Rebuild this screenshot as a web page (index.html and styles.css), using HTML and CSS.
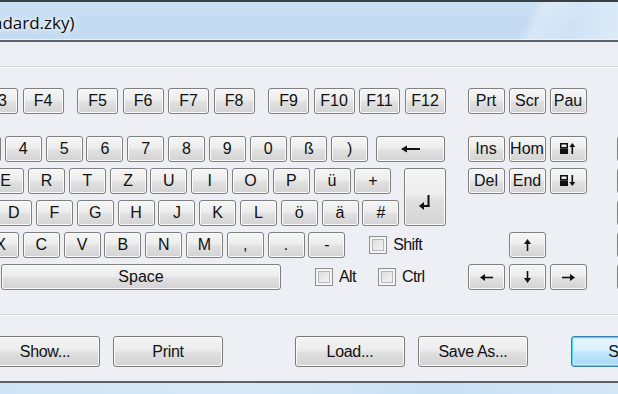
FILE: index.html
```html
<!DOCTYPE html>
<html>
<head>
<meta charset="utf-8">
<link rel="stylesheet" href="styles.css">
</head>
<body>
<div class="screen">
  <header class="titlebar"><span class="title">ndard.zky)</span></header>
  <main class="dialog">
    <div class="band"></div>
    <div class="keyboard">
      <div class="frow">
        <span class="key fk">F3</span><span class="key fk">F4</span>
        <span class="key fk grp">F5</span><span class="key fk">F6</span><span class="key fk">F7</span><span class="key fk">F8</span>
        <span class="key fk grp">F9</span><span class="key fk">F10</span><span class="key fk">F11</span><span class="key fk">F12</span>
        <span class="key sk first">Prt</span><span class="key sk">Scr</span><span class="key sk">Pau</span>
      </div>
      <div class="main">
        <div class="alpha">
          <div class="row r2">
            <span class="key">3</span><span class="key">4</span><span class="key">5</span><span class="key">6</span><span class="key">7</span><span class="key">8</span><span class="key">9</span><span class="key">0</span><span class="key">ß</span><span class="key">)</span>
            <span class="key back"><svg width="19" height="8" viewBox="0 0 19 8"><path d="M0 4 L6 0.5 L6 7.5 Z" fill="#111"/><rect x="5" y="3" width="14" height="2" fill="#111"/></svg></span>
          </div>
          <div class="row34">
            <div class="col34">
              <div class="row r3">
                <span class="key">E</span><span class="key">R</span><span class="key">T</span><span class="key">Z</span><span class="key">U</span><span class="key">I</span><span class="key">O</span><span class="key">P</span><span class="key">ü</span><span class="key">+</span>
              </div>
              <div class="row r4">
                <span class="key">D</span><span class="key">F</span><span class="key">G</span><span class="key">H</span><span class="key">J</span><span class="key">K</span><span class="key">L</span><span class="key">ö</span><span class="key">ä</span><span class="key">#</span>
              </div>
            </div>
            <span class="key enter"><svg width="12" height="15" viewBox="0 0 12 15"><rect x="8.5" y="0" width="2" height="12" fill="#111"/><rect x="4" y="10" width="6.5" height="2" fill="#111"/><path d="M0 11 L5 7 L5 15 Z" fill="#111"/></svg></span>
          </div>
          <div class="row r5">
            <span class="key">X</span><span class="key">C</span><span class="key">V</span><span class="key">B</span><span class="key">N</span><span class="key">M</span><span class="key">,</span><span class="key">.</span><span class="key">-</span>
            <label class="chk shift"><span class="box"></span><span class="lbl">Shift</span></label>
          </div>
          <div class="row r6">
            <span class="key space">Space</span>
            <label class="chk alt"><span class="box"></span><span class="lbl">Alt</span></label>
            <label class="chk ctrl"><span class="box"></span><span class="lbl">Ctrl</span></label>
          </div>
        </div>
        <div class="nav">
          <span class="key sk">Ins</span><span class="key sk">Hom</span>
          <span class="key sk"><svg width="16" height="11" viewBox="0 0 16 11"><rect x="0.75" y="0.75" width="6.5" height="4" fill="none" stroke="#111" stroke-width="1.5"/><rect x="0" y="5.5" width="8" height="5.5" fill="#111"/><rect x="11.5" y="2" width="1.6" height="9" fill="#111"/><path d="M12.3 0 L15.3 4 L9.3 4 Z" fill="#111"/></svg></span>
          <span class="key sk">Del</span><span class="key sk">End</span>
          <span class="key sk"><svg width="16" height="11" viewBox="0 0 16 11"><rect x="0.75" y="0.75" width="6.5" height="4" fill="none" stroke="#111" stroke-width="1.5"/><rect x="0" y="5.5" width="8" height="5.5" fill="#111"/><rect x="11.5" y="0" width="1.6" height="9" fill="#111"/><path d="M12.3 11 L15.3 7 L9.3 7 Z" fill="#111"/></svg></span>
          <span class="key sk up"><svg width="7" height="12" viewBox="0 0 7 12"><path d="M3.5 0 L7 5 L0 5 Z" fill="#111"/><rect x="2.7" y="4" width="1.6" height="8" fill="#111"/></svg></span>
          <span class="key sk lft"><svg width="13" height="7" viewBox="0 0 13 7"><path d="M0 3.5 L5 0 L5 7 Z" fill="#111"/><rect x="4" y="2.7" width="9" height="1.6" fill="#111"/></svg></span>
          <span class="key sk dwn"><svg width="7" height="12" viewBox="0 0 7 12"><path d="M3.5 12 L7 7 L0 7 Z" fill="#111"/><rect x="2.7" y="0" width="1.6" height="8" fill="#111"/></svg></span>
          <span class="key sk rgt"><svg width="13" height="7" viewBox="0 0 13 7"><path d="M13 3.5 L8 0 L8 7 Z" fill="#111"/><rect x="0" y="2.7" width="9" height="1.6" fill="#111"/></svg></span>
        </div>
        <div class="numpad">
          <span class="key sk"></span><span class="key sk"></span><span class="key sk"></span><span class="key sk"></span><span class="key sk"></span>
        </div>
      </div>
    </div>
    <div class="sep"></div>
    <div class="buttons">
      <button class="btn">Show...</button>
      <button class="btn">Print</button>
      <button class="btn far">Load...</button>
      <button class="btn">Save As...</button>
      <button class="btn def">Save</button>
    </div>
  </main>
  <footer class="framebottom"></footer>
</div>
</body>
</html>
```
FILE: styles.css
```css
html, body {
  margin: 0;
  padding: 0;
  width: 618px;
  height: 394px;
  overflow: hidden;
  background: #eeeef5;
}
.screen {
  width: 618px;
  height: 394px;
  overflow: hidden;
  display: flex;
  flex-direction: column;
  font-family: "Liberation Sans", Arial, sans-serif;
  color: #111;
}
.titlebar {
  height: 38px;
  flex: none;
  border-top: 2px solid #3b4046;
  border-bottom: 2px solid #5a6068;
  box-shadow: inset 0 -1px 0 #e8f2fb;
  background:
    linear-gradient(115deg, rgba(255,255,255,0) 0%, rgba(255,255,255,0) 84%, rgba(255,255,255,0.35) 86%, rgba(255,255,255,0.2) 92%, rgba(255,255,255,0.45) 100%),
    linear-gradient(180deg, #c9e0f4 0%, #c2daf1 60%, #c5dcf1 100%);
  display: flex;
  align-items: center;
  overflow: hidden;
}
.title {
  font-family: "Open Sans", "Noto Sans", sans-serif;
  font-size: 17px;
  margin-left: -8px;
  margin-top: 2px;
  color: #0b0b0b;
  text-shadow: 0 0 8px #ffffff, 0 0 4px #f4faff;
}
.dialog {
  flex: none;
  height: 339px;
  background: #eeeef5;
  display: flex;
  flex-direction: column;
}
.band {
  height: 24px;
  flex: none;
  border-bottom: 1px solid #d5d5db;
  box-shadow: 0 1px 0 #fbfbfd;
}
.keyboard {
  margin-left: -40px;
  padding-top: 21px;
  display: flex;
  flex-direction: column;
}
.key {
  box-sizing: border-box;
  flex: none;
  width: 37px;
  height: 26.5px;
  border: 1px solid #7f7f7f;
  border-radius: 3px;
  box-shadow: inset 0 0 0 1px #fbfbfb;
  background: linear-gradient(180deg, #f5f5f5 0%, #ededed 45%, #e0e0e0 55%, #d3d3d3 100%);
  display: flex;
  align-items: center;
  justify-content: center;
  font-size: 16px;
  line-height: 1;
  color: #111;
}
.frow {
  display: flex;
  gap: 4.5px;
  padding-left: 17px;
  height: 26px;
}
.frow .key { height: 26px; }
.fk { width: 41px; }
.fk.grp { margin-left: 9px; }
.sk { width: 37px; }
.frow .sk { margin-left: -0.5px; }
.frow .sk.first { margin-left: 17.5px; }
.main {
  display: flex;
  margin-top: 21.5px;
}
.alpha {
  width: 485.5px;
  flex: none;
  display: flex;
  flex-direction: column;
  gap: 5.6px;
}
.row {
  display: flex;
  gap: 3.8px;
  align-items: center;
  height: 26.5px;
}
.r2 { padding-left: 4px; }
.r3 { padding-left: 27.2px; }
.r4 { padding-left: 35.2px; }
.r5 { padding-left: 22px; }
.r6 { padding-left: 41px; }
.back { width: 69.5px; margin-left: 4px; }
.row34 { display: flex; }
.col34 {
  width: 444px;
  display: flex;
  flex-direction: column;
  gap: 5.6px;
}
.enter {
  width: 41.5px;
  height: 58.7px;
  padding-top: 12px;
}
.space { width: 280px; font-size: 16px; }
.chk {
  display: flex;
  align-items: center;
  flex: none;
}
.chk .box {
  box-sizing: border-box;
  width: 18px;
  height: 18px;
  border: 1px solid #8e8f8f;
  background: linear-gradient(135deg, #d4d4d4 0%, #e9e9e9 50%, #f7f7f7 100%);
  box-shadow: inset 0 0 0 2px #f4f4f4, inset 0 0 0 3px #b9b9b9;
}
.chk .lbl {
  margin-left: 6px;
  font-size: 16px;
  letter-spacing: -0.6px;
}
.shift { margin-left: 20px; }
.alt { margin-left: 30.2px; width: 63px; }
.ctrl { margin-left: -3.8px; }
.nav {
  margin-left: 22px;
  display: grid;
  grid-template-columns: 37px 37px 37px;
  grid-template-rows: repeat(5, 26.5px);
  column-gap: 4px;
  row-gap: 5.6px;
  flex: none;
}
.nav .up { grid-row: 4; grid-column: 2; }
.nav .lft { grid-row: 5; grid-column: 1; }
.nav .dwn { grid-row: 5; grid-column: 2; }
.nav .rgt { grid-row: 5; grid-column: 3; }
.numpad {
  margin-left: 30.5px;
  display: flex;
  flex-direction: column;
  gap: 5.6px;
  flex: none;
}
.sep {
  margin-top: 24px;
  height: 0;
  border-top: 1px solid #d5d5db;
  border-bottom: 1px solid #fbfbfd;
  flex: none;
}
.buttons {
  margin-top: 20px;
  margin-left: -10px;
  display: flex;
  gap: 13px;
}
.btn {
  box-sizing: border-box;
  width: 110px;
  height: 31px;
  flex: none;
  border: 1px solid #7a7a7a;
  border-radius: 3px;
  box-shadow: inset 0 0 0 1px #fbfbfb;
  background: linear-gradient(180deg, #f4f4f4 0%, #ececec 45%, #dfdfdf 55%, #d2d2d2 100%);
  font-family: "Liberation Sans", Arial, sans-serif;
  font-size: 16px;
  color: #111;
  padding: 0;
  letter-spacing: -0.3px;
}
.btn.far { margin-left: 59px; }
.btn.def {
  margin-left: 30px;
  border-color: #3c7fb1;
  box-shadow: inset 0 0 0 1px #48d8fb, inset 0 0 0 2px #c5ecfc;
  background: linear-gradient(180deg, #eaf6fd 0%, #d9f0fc 45%, #bee6fd 55%, #a7d9f5 100%);
}
.framebottom {
  flex: none;
  height: 11px;
  margin-top: 0;
  border-top: 2px solid #5b6168;
  background: linear-gradient(90deg, #cfe4f6 0%, #d8eaf8 40%, #c9e0f4 70%, #d3e7f7 100%);
}
```
